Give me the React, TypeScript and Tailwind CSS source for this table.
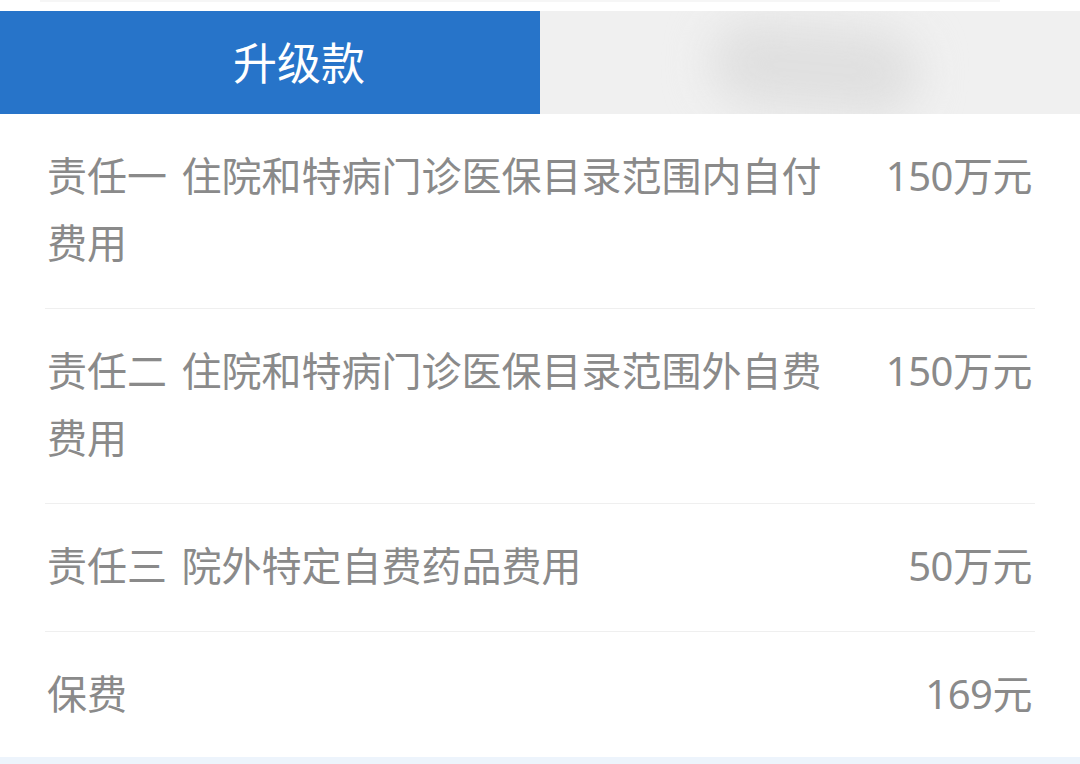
import React from "react";

const font = { fontFamily: '"Noto Sans", "Noto Sans CJK SC", sans-serif' };

const rows: { label: string; value: string }[] = [
  { label: "责任一 住院和特病门诊医保目录范围内自付费用", value: "150万元" },
  { label: "责任二 住院和特病门诊医保目录范围外自费费用", value: "150万元" },
  { label: "责任三 院外特定自费药品费用", value: "50万元" },
  { label: "保费", value: "169元" },
];

export default function App() {
  return (
    <div className="w-[1080px] h-[764px] bg-white overflow-hidden flex flex-col" style={font}>
      <div className="h-[11px] shrink-0 bg-white px-[40px]">
        <div className="h-[2px] w-[960px] bg-[#f6f6f6]" />
      </div>
      <div className="flex h-[103px] shrink-0">
        <div className="w-[540px] bg-[#2774c9] flex items-center justify-center pl-[58px]">
          <span className="text-white text-[44px] leading-none">升级款</span>
        </div>
        <div className="flex-1 bg-[#f0f0f0] relative overflow-hidden">
          <div className="absolute left-[170px] top-[14px] w-[210px] h-[86px] rounded-full bg-[#e0e0e0] blur-[22px] rotate-[5deg]" />
        </div>
      </div>
      <div className="flex-1 min-h-0 overflow-hidden px-[45px]">
        {rows.map((r, i) => (
          <div
            key={i}
            className={`flex justify-between pt-[28px] pb-[32px] ${i < rows.length - 1 ? "border-b border-[#efefef]" : ""}`}
          >
            <div className="w-[795px] pl-[2px] text-[40px] leading-[67px] text-[#8a8a8a] [word-spacing:4px]">{r.label}</div>
            <div className="pr-[3px] text-[40px] leading-[67px] text-[#8a8a8a] whitespace-nowrap tracking-[-0.5px]">{r.value}</div>
          </div>
        ))}
      </div>
      <div className="h-[7px] shrink-0 bg-[#edf4fc]" />
    </div>
  );
}
